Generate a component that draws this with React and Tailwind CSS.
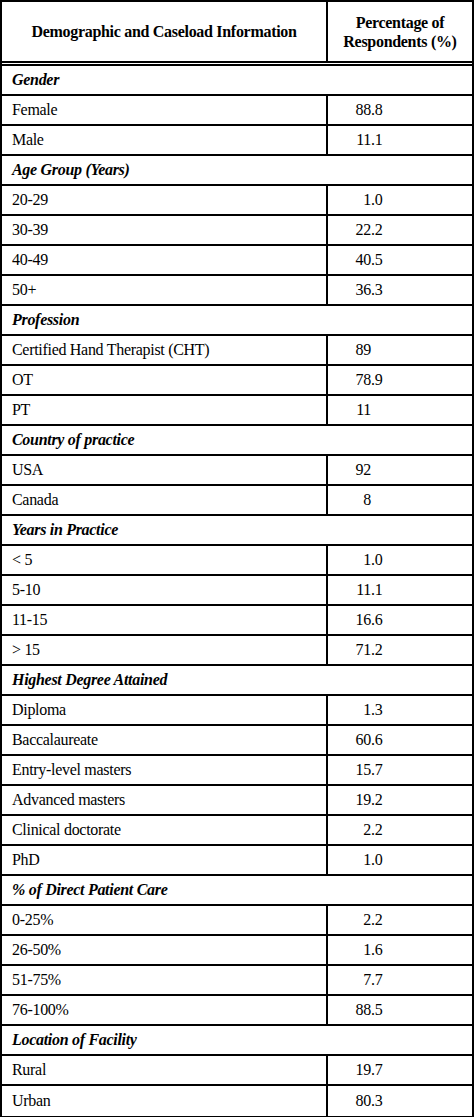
const SECTIONS = [
  { title: 'Gender', rows: [['Female', '88.8'], ['Male', '11.1']] },
  { title: 'Age Group (Years)', rows: [['20-29', '1.0'], ['30-39', '22.2'], ['40-49', '40.5'], ['50+', '36.3']] },
  { title: 'Profession', rows: [['Certified Hand Therapist (CHT)', '89'], ['OT', '78.9'], ['PT', '11']] },
  { title: 'Country of practice', rows: [['USA', '92'], ['Canada', '8']] },
  { title: 'Years in Practice', rows: [['< 5', '1.0'], ['5-10', '11.1'], ['11-15', '16.6'], ['> 15', '71.2']] },
  {
    title: 'Highest Degree Attained',
    rows: [
      ['Diploma', '1.3'],
      ['Baccalaureate', '60.6'],
      ['Entry-level masters', '15.7'],
      ['Advanced masters', '19.2'],
      ['Clinical doctorate', '2.2'],
      ['PhD', '1.0'],
    ],
  },
  { title: '% of Direct Patient Care', rows: [['0-25%', '2.2'], ['26-50%', '1.6'], ['51-75%', '7.7'], ['76-100%', '88.5']] },
  { title: 'Location of Facility', rows: [['Rural', '19.7'], ['Urban', '80.3']] },
]

// decimal-aligned value: integer part right-aligned in a fixed box
function Value({ v }) {
  const [int, frac] = v.split('.')
  return (
    <div className="flex">
      <span className="w-[43px] text-right">{int}</span>
      {frac !== undefined && <span>.{frac}</span>}
    </div>
  )
}

export default function App() {
  const lines = []
  SECTIONS.forEach((s) => {
    lines.push({ type: 'section', label: s.title })
    s.rows.forEach(([label, value]) => lines.push({ type: 'row', label, value }))
  })

  return (
    <div
      className="w-[474px] bg-white text-black text-[16px] tracking-[-0.3px] border-2 border-black"
      style={{ fontFamily: '"Liberation Serif", "Times New Roman", serif' }}
    >
      {/* Header */}
      <div className="flex h-[64px] border-b-[5px] border-double border-black font-bold">
        <div className="w-[326px] shrink-0 border-r-2 border-black flex items-center justify-center">
          Demographic and Caseload Information
        </div>
        <div className="flex-1 flex flex-col items-center justify-center leading-[19px] text-center">
          <span>Percentage of</span>
          <span>Respondents (%)</span>
        </div>
      </div>

      {lines.map((l, i) => {
        const last = i === lines.length - 1
        if (l.type === 'section') {
          return (
            <div
              key={i}
              className={`h-[30px] flex items-center pl-[10px] font-bold italic ${last ? '' : 'border-b-2 border-black'}`}
            >
              {l.label}
            </div>
          )
        }
        return (
          <div key={i} className={`h-[30px] flex ${last ? '' : 'border-b-2 border-black'}`}>
            <div className="w-[326px] shrink-0 border-r-2 border-black flex items-center pl-[10px]">{l.label}</div>
            <div className="flex-1 flex items-center">
              <Value v={l.value} />
            </div>
          </div>
        )
      })}
    </div>
  )
}
